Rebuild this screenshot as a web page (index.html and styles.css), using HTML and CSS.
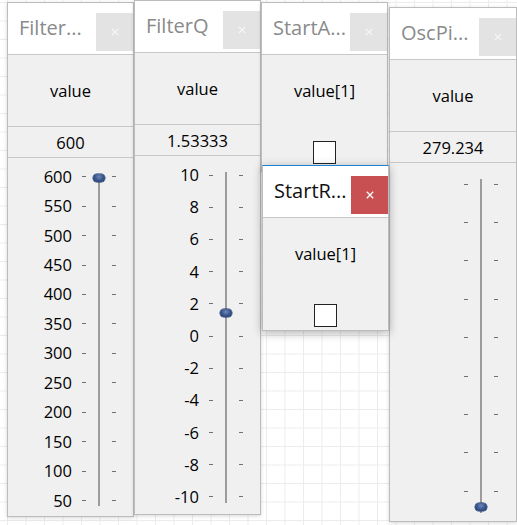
FILE: index.html
```
<!DOCTYPE html>
<html>
<head>
<meta charset="utf-8">
<link rel="stylesheet" href="styles.css">
</head>
<body>
<div class="desk">

  <section class="win w1">
    <header class="tb"><span class="ttl">Filter...</span><span class="cls"><svg viewBox="0 0 10 10" width="8" height="8"><path d="M1 1L9 9M9 1L1 9"/></svg></span></header>
    <div class="vrow">value</div>
    <div class="nrow">600</div>
    <div class="slider s1">
      <ul class="ticks">
        <li><span class="lab">600</span><i class="tk"></i><i class="tk"></i></li>
        <li><span class="lab">550</span><i class="tk"></i><i class="tk"></i></li>
        <li><span class="lab">500</span><i class="tk"></i><i class="tk"></i></li>
        <li><span class="lab">450</span><i class="tk"></i><i class="tk"></i></li>
        <li><span class="lab">400</span><i class="tk"></i><i class="tk"></i></li>
        <li><span class="lab">350</span><i class="tk"></i><i class="tk"></i></li>
        <li><span class="lab">300</span><i class="tk"></i><i class="tk"></i></li>
        <li><span class="lab">250</span><i class="tk"></i><i class="tk"></i></li>
        <li><span class="lab">200</span><i class="tk"></i><i class="tk"></i></li>
        <li><span class="lab">150</span><i class="tk"></i><i class="tk"></i></li>
        <li><span class="lab">100</span><i class="tk"></i><i class="tk"></i></li>
        <li><span class="lab">50</span><i class="tk"></i><i class="tk"></i></li>
      </ul>
      <div class="track"></div>
      <div class="knob" style="top:16px"></div>
    </div>
  </section>

  <section class="win w2">
    <header class="tb"><span class="ttl">FilterQ</span><span class="cls"><svg viewBox="0 0 10 10" width="8" height="8"><path d="M1 1L9 9M9 1L1 9"/></svg></span></header>
    <div class="vrow">value</div>
    <div class="nrow">1.53333</div>
    <div class="slider s2">
      <ul class="ticks">
        <li><span class="lab">10</span><i class="tk"></i><i class="tk"></i></li>
        <li><span class="lab">8</span><i class="tk"></i><i class="tk"></i></li>
        <li><span class="lab">6</span><i class="tk"></i><i class="tk"></i></li>
        <li><span class="lab">4</span><i class="tk"></i><i class="tk"></i></li>
        <li><span class="lab">2</span><i class="tk"></i><i class="tk"></i></li>
        <li><span class="lab">0</span><i class="tk"></i><i class="tk"></i></li>
        <li><span class="lab">-2</span><i class="tk"></i><i class="tk"></i></li>
        <li><span class="lab">-4</span><i class="tk"></i><i class="tk"></i></li>
        <li><span class="lab">-6</span><i class="tk"></i><i class="tk"></i></li>
        <li><span class="lab">-8</span><i class="tk"></i><i class="tk"></i></li>
        <li><span class="lab">-10</span><i class="tk"></i><i class="tk"></i></li>
      </ul>
      <div class="track"></div>
      <div class="knob" style="top:153px"></div>
    </div>
  </section>

  <section class="win w3">
    <header class="tb"><span class="ttl">StartA...</span><span class="cls"><svg viewBox="0 0 10 10" width="8" height="8"><path d="M1 1L9 9M9 1L1 9"/></svg></span></header>
    <div class="cbody">
      <div class="clab">value[1]</div>
      <span class="box"></span>
    </div>
  </section>

  <section class="win w4">
    <header class="tb"><span class="ttl">OscPi...</span><span class="cls"><svg viewBox="0 0 10 10" width="8" height="8"><path d="M1 1L9 9M9 1L1 9"/></svg></span></header>
    <div class="vrow">value</div>
    <div class="nrow">279.234</div>
    <div class="slider s4">
      <ul class="ticks">
        <li><span class="lab"></span><i class="tk"></i><i class="tk"></i></li>
        <li><span class="lab"></span><i class="tk"></i><i class="tk"></i></li>
        <li><span class="lab"></span><i class="tk"></i><i class="tk"></i></li>
        <li><span class="lab"></span><i class="tk"></i><i class="tk"></i></li>
        <li><span class="lab"></span><i class="tk"></i><i class="tk"></i></li>
        <li><span class="lab"></span><i class="tk"></i><i class="tk"></i></li>
        <li><span class="lab"></span><i class="tk"></i><i class="tk"></i></li>
        <li><span class="lab"></span><i class="tk"></i><i class="tk"></i></li>
        <li><span class="lab"></span><i class="tk"></i><i class="tk"></i></li>
      </ul>
      <div class="track"></div>
      <div class="knob" style="top:340px"></div>
    </div>
  </section>

  <section class="win w5 active">
    <header class="tb"><span class="ttl">StartR...</span><span class="cls red"><svg viewBox="0 0 10 10" width="8" height="8"><path d="M1 1L9 9M9 1L1 9"/></svg></span></header>
    <div class="cbody">
      <div class="clab">value[1]</div>
      <span class="box"></span>
    </div>
  </section>

</div>
</body>
</html>
```
FILE: styles.css
```
html, body {
  margin: 0;
  padding: 0;
}
body {
  width: 517px;
  height: 525px;
  overflow: hidden;
  font-family: "Open Sans", "Noto Sans", "DejaVu Sans", sans-serif;
  color: #000;
  background-color: #fff;
  background-image:
    linear-gradient(#ececec 1px, transparent 1px),
    linear-gradient(90deg, #ececec 1px, transparent 1px);
  background-size: 18.5px 18.5px;
  background-position: 7px 2px;
}
.desk {
  position: relative;
  width: 517px;
  height: 525px;
}
.win {
  position: absolute;
  box-sizing: border-box;
  width: 127px;
  display: flex;
  flex-direction: column;
  background: #f0f0f0;
  border: 1px solid #bcbcbc;
  box-shadow: 0 1px 4px rgba(0, 0, 0, 0.16);
}
.w1 { left: 7px; top: 2px; height: 515px; }
.w2 { left: 134px; top: 0; height: 515px; }
.w3 { left: 261px; top: 2px; height: 170px; }
.w4 { left: 389px; top: 7px; height: 515px; width: 128px; }
.w5 {
  left: 262px;
  top: 165px;
  height: 166px;
  border-top: 1px solid #1883d7;
  box-shadow: 0 2px 9px rgba(0, 0, 0, 0.32);
  z-index: 2;
}

.tb {
  box-sizing: border-box;
  height: 52px;
  flex: none;
  display: flex;
  justify-content: space-between;
  align-items: flex-start;
  background: #fff;
  border-bottom: 1px solid #c8c8c8;
}
.ttl {
  padding: 11px 0 0 11px;
  font-size: 20px;
  line-height: 28px;
  color: #8a8a8a;
  white-space: nowrap;
}
.active .ttl { color: #111; }
.cls {
  flex: none;
  width: 37px;
  height: 38px;
  margin-top: 10px;
  display: flex;
  align-items: center;
  justify-content: center;
  background: #e3e3e3;
}
.cls svg path {
  stroke: #f8f8f8;
  stroke-width: 1.3;
  fill: none;
}
.cls.red { background: #c95052; }
.cls.red svg path { stroke: #fff; stroke-width: 1.6; }

.vrow {
  box-sizing: border-box;
  height: 72px;
  flex: none;
  display: flex;
  align-items: center;
  justify-content: center;
  font-size: 16.5px;
  border-bottom: 1px solid #c8c8c8;
}
.nrow {
  box-sizing: border-box;
  height: 31px;
  flex: none;
  display: flex;
  align-items: center;
  justify-content: center;
  font-size: 16.5px;
  border-bottom: 1px solid #c8c8c8;
}

.slider {
  position: relative;
  flex: 1;
}
.ticks {
  list-style: none;
  margin: 0;
  padding: 0;
  display: flex;
  flex-direction: column;
}
.ticks li {
  display: grid;
  grid-template-columns: 64px 10px 4px 26px 4px;
  align-items: center;
  font-size: 16.5px;
}
.lab {
  grid-column: 1;
  text-align: right;
  line-height: 20px;
}
.tk {
  display: block;
  height: 1px;
  background: #707070;
}
.tk:nth-of-type(1) { grid-column: 3; }
.tk:nth-of-type(2) { grid-column: 5; }

.s1 .ticks { padding-top: 4px; }
.s1 .ticks li { height: 29.45px; }
.s2 .ticks { padding-top: 3px; }
.s2 .ticks li { height: 32.2px; }
.s4 .ticks { padding-top: 2px; }
.s4 .ticks li { height: 38.4px; }

.track {
  position: absolute;
  left: 90px;
  width: 2px;
  background: #9c9c9c;
}
.s1 .track { top: 19px; height: 329px; }
.s2 .track { top: 16px; height: 331px; }
.s4 .track { top: 16px; height: 334px; }

.knob {
  position: absolute;
  left: 85px;
  width: 12px;
  height: 8px;
  border-radius: 4px;
  background: radial-gradient(ellipse at 50% 35%, #6f88b6 0%, #34518a 55%, #1f3a69 100%);
  box-shadow: 0 0 0 0.5px #1d3560;
}

.cbody {
  flex: 1;
  display: flex;
  flex-direction: column;
  align-items: center;
}
.clab {
  height: 70px;
  display: flex;
  align-items: center;
  font-size: 16.5px;
}
.box {
  box-sizing: border-box;
  width: 23px;
  height: 23px;
  margin-top: 16px;
  background: #fff;
  border: 1.5px solid #222;
}
```
